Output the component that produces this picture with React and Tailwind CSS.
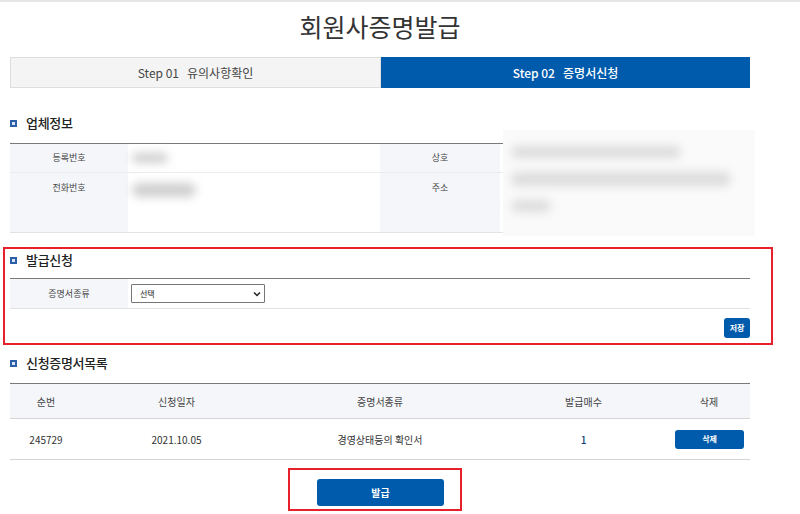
import React from "react";

const font = { fontFamily: '"Noto Sans CJK KR", "Noto Sans", sans-serif' };

const SectionTitle = ({ children }) => (
  <div className="flex items-center h-[20px]">
    <span className="w-[7px] h-[7px] border-2 border-[#2b5fa8] bg-[#d6e4f5] mr-[9px]"></span>
    <h3 className="text-[13px] font-medium text-[#222] tracking-tight">{children}</h3>
  </div>
);

const Blur = ({ w, h = 12, className = "" }) => (
  <div
    className={"bg-[#cfcfcf] blur-[5px] rounded-full " + className}
    style={{ width: w, height: h }}
  ></div>
);

const App = () => {
  return (
    <div className="w-[800px] h-[514px] bg-white overflow-hidden border-t-2 border-[#e6e6e6] text-[#333]" style={font}>
      {/* title */}
      <h1 className="text-center text-[25px] text-[#333] font-normal h-[55px] pt-[6px] pr-[40px]">
        회원사증명발급
      </h1>

      {/* step tabs */}
      <div className="ml-[10px] w-[740px] flex h-[31px] text-[12px]">
        <div className="flex-1 flex items-center justify-center bg-[#f4f4f4] border border-[#dedede] text-[#444]">
          Step 01&nbsp;&nbsp;&nbsp;유의사항확인
        </div>
        <div className="flex-1 flex items-center justify-center bg-[#005bac] text-white font-medium">
          Step 02&nbsp;&nbsp;&nbsp;증명서신청
        </div>
      </div>

      {/* 업체정보 */}
      <div className="ml-[10px] w-[740px] mt-[25px]">
        <SectionTitle>업체정보</SectionTitle>
        <div className="relative mt-[10px]">
          <div className="border-t border-[#7a7a7a] border-b border-b-[#e3e3e3] text-[9px] text-[#444]">
            <div className="flex h-[29px] border-b border-[#ececec]">
              <div className="w-[118px] bg-[#f4f6fa] flex items-center justify-center">등록번호</div>
              <div className="w-[252px] flex items-center pl-[4px]">
                <Blur w={36} h={10} />
              </div>
              <div className="w-[120px] bg-[#f4f6fa] flex items-center justify-center">상호</div>
              <div className="flex-1"></div>
            </div>
            <div className="flex h-[59px]">
              <div className="w-[118px] bg-[#f4f6fa] flex justify-center pt-[8px]">전화번호</div>
              <div className="w-[252px] pl-[4px] pt-[10px]">
                <Blur w={64} h={14} />
              </div>
              <div className="w-[120px] bg-[#f4f6fa] flex justify-center pt-[8px]">주소</div>
              <div className="flex-1"></div>
            </div>
          </div>
          {/* blurred overlay over values */}
          <div className="absolute left-[493px] top-[-13px] w-[252px] h-[106px] bg-[#fafafa] flex flex-col gap-[14px] pt-[16px] pl-[8px]">
            <Blur w={170} h={12} className="bg-[#dcdcdc]" />
            <Blur w={220} h={14} className="bg-[#dcdcdc]" />
            <Blur w={40} h={12} className="bg-[#dcdcdc]" />
          </div>
        </div>
      </div>

      {/* 발급신청 (red box) */}
      <div className="ml-[3px] w-[770px] mt-[14px] border-2 border-[#e8202b] pl-[5px] pr-[21px] pt-[1px] h-[98px]">
        <SectionTitle>발급신청</SectionTitle>
        <div className="mt-[8px] border-t border-[#7a7a7a] border-b border-b-[#e3e3e3] flex h-[31px] text-[9px] text-[#444]">
          <div className="w-[118px] bg-[#f4f6fa] flex items-center justify-center">증명서종류</div>
          <div className="flex items-center pl-[3px]">
            <div className="w-[134px] h-[19px] border border-[#767676] rounded-[1px] flex items-center justify-between pl-[8px] pr-[3px] text-[8px] text-[#222]">
              <span>선택</span>
              <svg width="8" height="6" viewBox="0 0 8 6">
                <path d="M1 1.5 L4 4.5 L7 1.5" stroke="#222" strokeWidth="1.5" fill="none" />
              </svg>
            </div>
          </div>
        </div>
        <div className="flex justify-end mt-[9px]">
          <button className="w-[26px] h-[20px] bg-[#005bac] rounded-[3px] text-white text-[8px] font-bold flex items-center justify-center">
            저장
          </button>
        </div>
      </div>

      {/* 신청증명서목록 */}
      <div className="ml-[10px] w-[740px] mt-[8px]">
        <SectionTitle>신청증명서목록</SectionTitle>
        <div className="mt-[10px] border-t border-[#7a7a7a] text-[10px]">
          <div className="grid grid-cols-[74px_185px_222px_185px_74px] h-[35px] bg-[#f4f6fa] border-b border-[#d4d4d4] text-[#444] items-center text-center">
            <div className="pr-[2px]">순번</div>
            <div>신청일자</div>
            <div>증명서종류</div>
            <div>발급매수</div>
            <div className="pr-[8px]">삭제</div>
          </div>
          <div className="grid grid-cols-[74px_185px_222px_185px_74px] h-[41px] border-b border-[#d4d4d4] text-[#333] items-center text-center">
            <div className="pr-[2px]">245729</div>
            <div>2021.10.05</div>
            <div>경영상태등의 확인서</div>
            <div className="text-[#173d73] font-medium">1</div>
            <div className="flex justify-start -ml-[1px]">
              <button className="w-[69px] h-[19px] bg-[#005bac] rounded-[3px] text-white text-[8px] font-bold">
                삭제
              </button>
            </div>
          </div>
        </div>
      </div>

      {/* 발급 button (red box) */}
      <div className="ml-[288px] mt-[8px] w-[174px] h-[43px] border-2 border-[#e8202b] pl-[27px] pt-[8px]">
        <button className="w-[127px] h-[27px] bg-[#005bac] rounded-[3px] text-white text-[10px] font-bold">
          발급
        </button>
      </div>
    </div>
  );
};

export default App;
